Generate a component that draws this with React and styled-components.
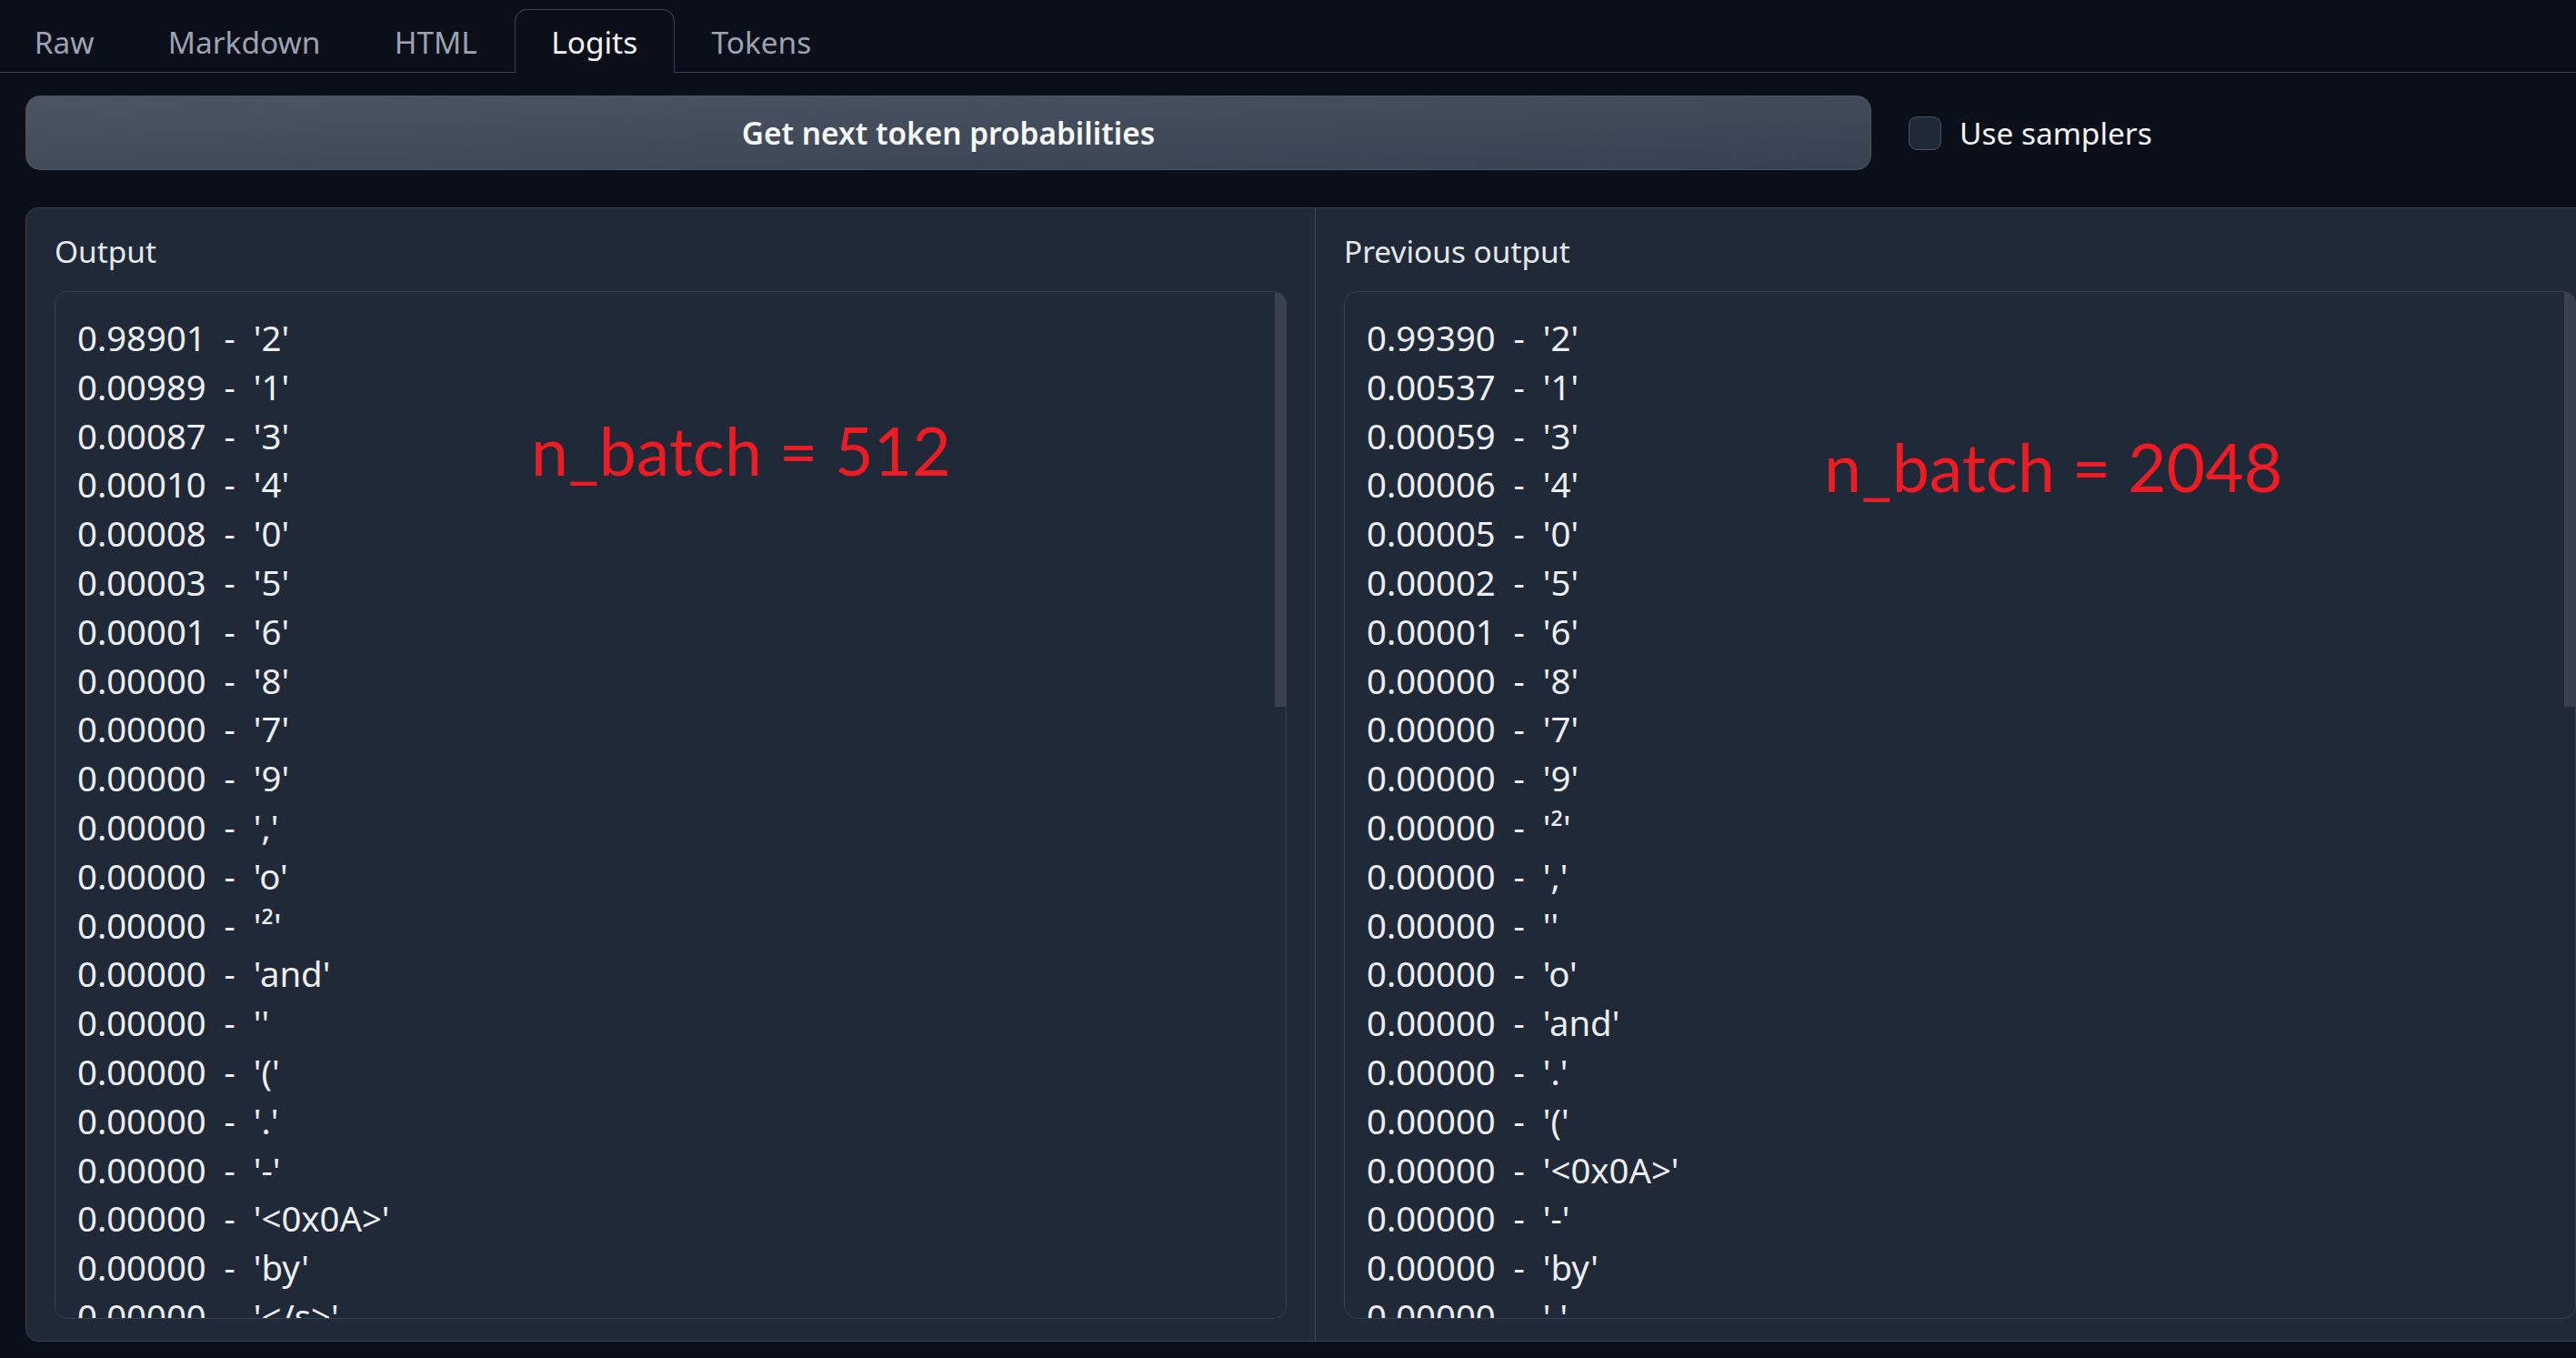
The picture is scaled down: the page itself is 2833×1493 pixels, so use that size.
import React from 'react';
import styled, { createGlobalStyle } from 'styled-components';

const GlobalStyle = createGlobalStyle`
  html, body {
    margin: 0;
    padding: 0;
    background: #0b0f19;
    width: 2833px;
    height: 1493px;
    overflow: hidden;
  }
  body {
    font-family: "Noto Sans", "Open Sans", sans-serif;
    color: #e5e7eb;
  }
`;

const TabNav = styled.div`
  display: flex;
  padding-top: 10px;
  margin-left: -3px;
  border-bottom: 1px solid #374151;
`;

const Tab = styled.button`
  height: 70px;
  margin-bottom: -1px;
  padding: 0 39.7px;
  font-family: inherit;
  font-size: 33.4px;
  line-height: 70px;
  color: ${p => (p.active ? '#f3f4f6' : '#9ca3af')};
  background: ${p => (p.active ? '#0b0f19' : 'transparent')};
  border: 1px solid ${p => (p.active ? '#374151' : 'transparent')};
  border-bottom: none;
  border-radius: 14px 14px 0 0;
  cursor: pointer;
`;

const Content = styled.div`
  padding: 25px 0 0 28px;
`;

const TopRow = styled.div`
  display: flex;
  align-items: center;
  gap: 41px;
`;

const ActionButton = styled.button`
  width: 2030px;
  height: 82px;
  flex: none;
  font-family: inherit;
  font-size: 33.4px;
  font-weight: 600;
  color: #f9fafb;
  background: linear-gradient(to bottom right, #4b5563, #374151);
  border: 1px solid #4b5563;
  border-radius: 16px;
  cursor: pointer;
`;

const CheckLabel = styled.label`
  display: flex;
  align-items: center;
  gap: 20px;
  font-size: 33.4px;
  color: #f3f4f6;
  cursor: pointer;
`;

const CheckBox = styled.span`
  width: 36px;
  height: 37px;
  box-sizing: border-box;
  background: #1f2937;
  border: 1px solid #4b5563;
  border-radius: 9px;
  box-shadow: 0 0 0 1px rgba(0, 0, 0, 0.35);
`;

const Panel = styled.div`
  display: grid;
  grid-template-columns: 1417px 1418px;
  gap: 1px;
  width: max-content;
  margin-top: 41px;
  background: #374151;
  border: 1px solid #374151;
  border-radius: 14px;
  overflow: hidden;
`;

const Column = styled.div`
  display: flex;
  flex-direction: column;
  padding: 22px 31px 24px;
  background: #1f2937;
`;

const Label = styled.span`
  font-size: 33.4px;
  line-height: 50px;
  margin-bottom: 19px;
  color: #e5e7eb;
`;

const Field = styled.div`
  position: relative;
  width: 1355px;
  height: 1130px;
  border-radius: 14px;
  overflow: hidden;
`;

const Output = styled.textarea`
  display: block;
  box-sizing: border-box;
  width: 100%;
  height: 100%;
  margin: 0;
  padding: 24px 24px 24px 24px;
  font-family: "Noto Sans", "Open Sans", sans-serif;
  font-size: 38.3px;
  line-height: 53.8px;
  color: #eceef1;
  background: #1f2937;
  border: 1px solid #374151;
  border-radius: 14px;
  outline: none;
  resize: none;
  white-space: pre;
  overflow: hidden;
`;

// headless screenshots hide native scrollbars, so the thumb is drawn over the field
const ScrollThumb = styled.div`
  position: absolute;
  top: 1px;
  right: 0;
  width: 13px;
  height: ${p => p.size}px;
  background: #394150;
  border-top-right-radius: 12px;
`;

const Note = styled.span`
  position: absolute;
  left: ${p => p.x}px;
  top: ${p => p.y}px;
  font-family: Lato, "Liberation Sans", sans-serif;
  font-size: 73.4px;
  line-height: 1;
  color: #ed1c24;
  white-space: pre;
  pointer-events: none;
`;

const current = [
  ['0.98901', "'2'"], ['0.00989', "'1'"], ['0.00087', "'3'"], ['0.00010', "'4'"],
  ['0.00008', "'0'"], ['0.00003', "'5'"], ['0.00001', "'6'"], ['0.00000', "'8'"],
  ['0.00000', "'7'"], ['0.00000', "'9'"], ['0.00000', "','"], ['0.00000', "'o'"],
  ['0.00000', "'²'"], ['0.00000', "'and'"], ['0.00000', "''"], ['0.00000', "'('"],
  ['0.00000', "'.'"], ['0.00000', "'-'"], ['0.00000', "'<0x0A>'"], ['0.00000', "'by'"],
  ['0.00000', "'</s>'"],
];

const previous = [
  ['0.99390', "'2'"], ['0.00537', "'1'"], ['0.00059', "'3'"], ['0.00006', "'4'"],
  ['0.00005', "'0'"], ['0.00002', "'5'"], ['0.00001', "'6'"], ['0.00000', "'8'"],
  ['0.00000', "'7'"], ['0.00000', "'9'"], ['0.00000', "'²'"], ['0.00000', "','"],
  ['0.00000', "''"], ['0.00000', "'o'"], ['0.00000', "'and'"], ['0.00000', "'.'"],
  ['0.00000', "'('"], ['0.00000', "'<0x0A>'"], ['0.00000', "'-'"], ['0.00000', "'by'"],
  ['0.00000', "' '"],
];

// the rest of the top 50 sits below the fold
const tail = [
  'x', 'in', '+', 'one', 'two', 'is', 'of', 'to', '*', 'the', ':', 'I', 'with',
  'a', '=', 'or', 'from', 'at', '/', 'A', 'ten', 'st', 'th', 'for', 'nd', 'rd',
  'times', 'as', 'on',
];

const format = rows =>
  rows
    .concat(tail.map(t => ['0.00000', `'${t}'`]))
    .map(([p, t]) => `${p}  -  ${t}`)
    .join('\n') + '\n';

const tabs = ['Raw', 'Markdown', 'HTML', 'Logits', 'Tokens'];

function OutputBox({ label, rows, note, noteX, noteY }) {
  return (
    <Column>
      <Label>{label}</Label>
      <Field>
        <Output readOnly value={format(rows)} />
        <ScrollThumb size={456} />
        <Note x={noteX} y={noteY}>{note}</Note>
      </Field>
    </Column>
  );
}

export default function App() {
  return (
    <>
      <GlobalStyle />
      <TabNav>
        {tabs.map(t => (
          <Tab key={t} active={t === 'Logits'}>{t}</Tab>
        ))}
      </TabNav>
      <Content>
        <TopRow>
          <ActionButton>Get next token probabilities</ActionButton>
          <CheckLabel>
            <CheckBox />
            Use samplers
          </CheckLabel>
        </TopRow>
        <Panel>
          <OutputBox label="Output" rows={current} note="n_batch = 512" noteX={524} noteY={139} />
          <OutputBox label="Previous output" rows={previous} note="n_batch = 2048" noteX={528} noteY={157} />
        </Panel>
      </Content>
    </>
  );
}
